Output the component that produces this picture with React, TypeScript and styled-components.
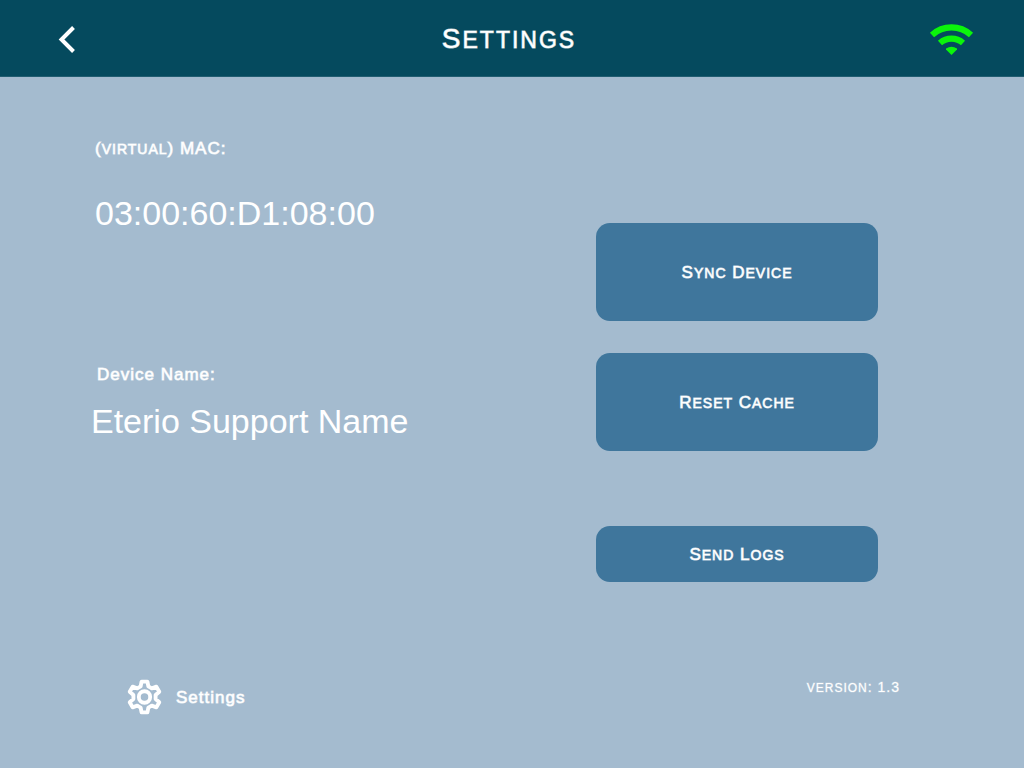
import React from 'react';
import styled, { createGlobalStyle, css } from 'styled-components';

const GlobalStyle = createGlobalStyle`
  *, *::before, *::after { box-sizing: border-box; }
  html { height: 100%; }
  body {
    margin: 0;
    min-height: 100%;
    background: #a4bbcf;
    color: #fff;
    font-family: "Liberation Sans", Arial, sans-serif;
  }
`;

/* Medium weight: regular letters with a soft outline. */
const medium = css`
  font-weight: 400;
  -webkit-text-stroke: 1px rgba(255, 255, 255, 0.7);
`;

const Header = styled.header`
  display: grid;
  grid-template-columns: 1fr auto 1fr;
  align-items: center;
  padding: 17px 50px 15px 50px;
  background: #054a5e;
  border-bottom: 1px solid #215d71;
`;

const BackButton = styled.button`
  justify-self: start;
  display: flex;
  padding: 4px 6px;
  border: 0;
  background: none;
  color: inherit;
  cursor: pointer;
`;

const Title = styled.h1`
  ${medium}
  margin: 0;
  padding-right: 6px;
  font-size: 28px;
  line-height: 44px;
  letter-spacing: 2px;
`;

const Signal = styled.svg`
  justify-self: end;
`;

const Small = styled.span<{ $size: number }>`
  font-size: ${({ $size }) => $size}px;
  line-height: 1;
  text-transform: uppercase;
`;

const Content = styled.main`
  display: grid;
  grid-template-columns: 16fr 9fr;
  padding: 60px 146px 0 95px;
`;

const Details = styled.section`
  display: flex;
  flex-direction: column;
  gap: 130px;
`;

const Field = styled.div<{ $gap: number; $indent?: number }>`
  display: flex;
  flex-direction: column;
  gap: ${({ $gap }) => $gap}px;
  padding-left: ${({ $indent = 0 }) => $indent}px;
`;

const Label = styled.label`
  ${medium}
  font-size: 17px;
  line-height: 24px;
  letter-spacing: 1px;
`;

const Value = styled.output`
  font-size: 34px;
  line-height: 40px;
`;

const NameInput = styled.input`
  width: 100%;
  height: 40px;
  margin-left: -6px;
  padding: 0;
  border: 0;
  outline: 0;
  background: none;
  color: inherit;
  font: 400 34px/40px "Liberation Sans", Arial, sans-serif;
`;

const Actions = styled.section`
  display: flex;
  flex-direction: column;
  gap: 32px;
  padding-top: 86px;
`;

const ActionButton = styled.button<{ $compact?: boolean }>`
  min-height: ${({ $compact }) => ($compact ? 56 : 98)}px;
  margin-top: ${({ $compact }) => ($compact ? 43 : 0)}px;
  padding: 2px 16px 0;
  border: 0;
  border-radius: 14px;
  background: #3f769c;
  color: inherit;
  font: 400 17px/24px "Liberation Sans", Arial, sans-serif;
  ${medium}
  letter-spacing: 1px;
  cursor: pointer;
`;

const Footer = styled.footer`
  display: flex;
  justify-content: space-between;
  align-items: flex-start;
  padding: 95px 124px 24px 126px;
`;

const SettingsLink = styled.a`
  ${medium}
  display: flex;
  align-items: center;
  gap: 13px;
  color: inherit;
  font-size: 17px;
  line-height: 24px;
  letter-spacing: 1px;
  text-decoration: none;
`;

const LinkText = styled.span`
  padding-top: 2px;
`;

const Version = styled.p`
  ${medium}
  margin: 0;
  font-size: 14px;
  line-height: 20px;
  letter-spacing: 1px;
  -webkit-text-stroke: 1px rgba(255, 255, 255, 0.3);
`;

/* Capitals keep the full size; runs of lowercase letters become smaller capitals. */
function SmallCaps({ text, size }: { text: string; size: number }) {
  return (
    <>
      {text.split(/([a-z]+)/).map((run, i) =>
        /^[a-z]/.test(run) ? (
          <Small key={i} $size={size}>
            {run}
          </Small>
        ) : (
          run
        ),
      )}
    </>
  );
}

export default function App() {
  return (
    <>
      <GlobalStyle />
      <Header>
        <BackButton type="button" aria-label="Back">
          <svg width="22" height="30" viewBox="0 0 22 30" fill="none" stroke="#fff" strokeWidth="4">
            <path d="M17.500 3.500L5.500 15.500L17.500 27.500" />
          </svg>
        </BackButton>
        <Title>
          <SmallCaps text="Settings" size={23} />
        </Title>
        <Signal width="46" height="34" viewBox="0 0 46 34" role="img" aria-label="Connected">
          <g fill="none" stroke="#0bf50b" strokeWidth="6.200">
            <path d="M4 13A29 29 0 0 1 43 13" />
            <path d="M12 21A17.500 17.500 0 0 1 35 21" />
          </g>
          <path d="M18 26.500Q23.500 23 29 26.500V27.500L23.500 33L18 27.500Z" fill="#0bf50b" />
        </Signal>
      </Header>

      <Content>
        <Details>
          <Field $gap={32}>
            <Label htmlFor="mac">
              <SmallCaps text="(virtual) MAC:" size={14} />
            </Label>
            <Value id="mac">03:00:60:D1:08:00</Value>
          </Field>
          <Field $gap={14} $indent={2}>
            <Label htmlFor="device-name">Device Name:</Label>
            <NameInput id="device-name" defaultValue="Eterio Support Name" />
          </Field>
        </Details>
        <Actions>
          <ActionButton type="button">
            <SmallCaps text="Sync Device" size={14} />
          </ActionButton>
          <ActionButton type="button">
            <SmallCaps text="Reset Cache" size={14} />
          </ActionButton>
          <ActionButton type="button" $compact>
            <SmallCaps text="Send Logs" size={14} />
          </ActionButton>
        </Actions>
      </Content>

      <Footer>
        <SettingsLink href="#settings">
          <svg width="37" height="40" viewBox="0 0 24 24" fill="none" stroke="#fff" strokeWidth="2.500" strokeLinejoin="round" aria-hidden="true">
            <path d="M10.100 2H13.900L14.500 5.100L16.700 6.400L19.700 5.300L21.600 8.600L19.200 10.700V13.300L21.600 15.400L19.700 18.700L16.700 17.600L14.500 18.900L13.900 22H10.100L9.500 18.900L7.300 17.600L4.300 18.700L2.400 15.400L4.800 13.300V10.700L2.400 8.600L4.300 5.300L7.300 6.400L9.500 5.100Z" />
            <circle cx="12" cy="12" r="3.700" />
          </svg>
          <LinkText>Settings</LinkText>
        </SettingsLink>
        <Version>
          <SmallCaps text="version: 1.3" size={12} />
        </Version>
      </Footer>
    </>
  );
}
